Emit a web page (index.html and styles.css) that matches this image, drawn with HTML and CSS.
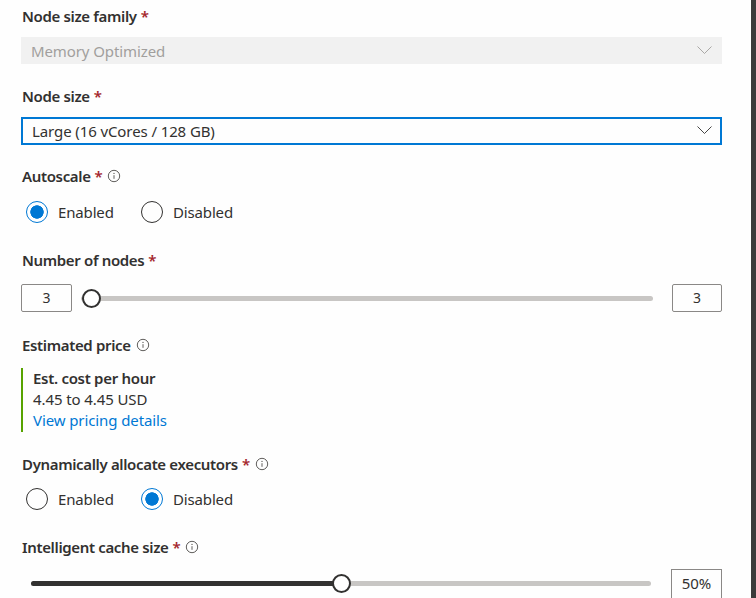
FILE: index.html
```html
<!DOCTYPE html>
<html lang="en">
<head>
    <meta charset="UTF-8">
    <meta name="viewport" content="width=device-width, initial-scale=1.0">
    <title>Node settings</title>
    <link rel="stylesheet" href="styles.css">
</head>
<body>
    <div class="page">
        <form class="settings">
            <div class="label label-first"><span>Node size family</span><span class="req">*</span></div>
            <div class="select select-disabled">
                <span>Memory Optimized</span>
                <svg class="chevron" width="15" height="8" viewBox="0 0 15 8"><path d="M.5.5l7 7 7-7" fill="none" stroke="currentColor" stroke-width=".9"/></svg>
            </div>

            <div class="label label-size"><span>Node size</span><span class="req">*</span></div>
            <div class="select select-focus">
                <span>Large (16 vCores / 128 GB)</span>
                <svg class="chevron" width="15" height="8" viewBox="0 0 15 8"><path d="M.5.5l7 7 7-7" fill="none" stroke="currentColor" stroke-width=".9"/></svg>
            </div>

            <div class="label label-auto"><span>Autoscale</span><span class="req">*</span>
                <svg class="info" width="14" height="14" viewBox="0 0 14 14"><circle cx="7" cy="7" r="5.7" fill="none" stroke="currentColor"/><path d="M7 6.2v3.6" stroke="currentColor"/><circle cx="7" cy="4.4" r=".7" fill="currentColor"/></svg>
            </div>
            <div class="radios">
                <div class="radio radio-on"><i></i>Enabled</div>
                <div class="radio"><i></i>Disabled</div>
            </div>

            <div class="label label-nodes"><span>Number of nodes</span><span class="req">*</span></div>
            <div class="slider-row slider-nodes">
                <div class="num">3</div>
                <div class="track track-nodes"><i class="thumb"></i></div>
                <div class="num num-right">3</div>
            </div>

            <div class="label label-price"><span>Estimated price</span>
                <svg class="info" width="14" height="14" viewBox="0 0 14 14"><circle cx="7" cy="7" r="5.7" fill="none" stroke="currentColor"/><path d="M7 6.2v3.6" stroke="currentColor"/><circle cx="7" cy="4.4" r=".7" fill="currentColor"/></svg>
            </div>
            <div class="price">
                <div class="price-title">Est. cost per hour</div>
                <div>4.45 to 4.45 USD</div>
                <a href="#">View pricing details</a>
            </div>

            <div class="label label-exec"><span>Dynamically allocate executors</span><span class="req">*</span>
                <svg class="info" width="14" height="14" viewBox="0 0 14 14"><circle cx="7" cy="7" r="5.7" fill="none" stroke="currentColor"/><path d="M7 6.2v3.6" stroke="currentColor"/><circle cx="7" cy="4.4" r=".7" fill="currentColor"/></svg>
            </div>
            <div class="radios radios-exec">
                <div class="radio"><i></i>Enabled</div>
                <div class="radio radio-on"><i></i>Disabled</div>
            </div>

            <div class="label label-cache"><span>Intelligent cache size</span><span class="req">*</span>
                <svg class="info" width="14" height="14" viewBox="0 0 14 14"><circle cx="7" cy="7" r="5.7" fill="none" stroke="currentColor"/><path d="M7 6.2v3.6" stroke="currentColor"/><circle cx="7" cy="4.4" r=".7" fill="currentColor"/></svg>
            </div>
            <div class="slider-row slider-cache">
                <div class="track track-cache"><b class="fill"></b><i class="thumb"></i></div>
                <div class="num num-cache">50%</div>
            </div>
        </form>
        <div class="scrollbar"></div>
    </div>
</body>
</html>
```

FILE: styles.css
```css
html, body {
    margin: 0;
    height: 100%;
    overflow: hidden;
}

body {
    font-family: 'Noto Sans', Arial, sans-serif;
    font-size: 15px;
    color: #323130;
    background-color: #fefefe;
}

.page {
    display: flex;
    height: 598px;
    overflow: hidden;
}

.settings {
    width: 701px;
    padding-left: 21px;
    flex: none;
}

.scrollbar {
    width: 5px;
    height: 598px;
    margin-left: 29px;
    background-color: #3b3b3b;
}

.label {
    display: flex;
    align-items: center;
    gap: 4px;
    height: 20px;
    padding-left: 1px;
    font-weight: 600;
    white-space: nowrap;
    letter-spacing: -0.35px;
}

.req {
    color: #a4262c;
}

.info {
    color: #605e5c;
    margin-left: 1px;
}

.label-first { margin-top: 6px; }
.label-size { margin-top: 22px; }
.label-auto { margin-top: 21px; }
.label-nodes { margin-top: 26px; }
.label-price { margin-top: 23px; }
.label-exec { margin-top: 22px; }
.label-cache { margin-top: 26px; }

.select {
    display: flex;
    align-items: center;
    justify-content: space-between;
    box-sizing: border-box;
    margin-top: 11px;
    padding: 0 10px;
    letter-spacing: -0.1px;
}

.select-disabled {
    height: 27px;
    background-color: #f1f1f1;
    color: #a19f9d;
}

.select-focus {
    height: 28px;
    border: 2px solid #0078d4;
    padding: 0 8px 0 9px;
    margin-top: 11px;
}

.chevron {
    margin-top: -2px;
}

.radios {
    display: flex;
    margin-top: 14px;
    height: 24px;
}

.radios-exec {
    margin-top: 13px;
}

.radio {
    display: flex;
    align-items: center;
    gap: 10px;
    width: 110px;
    padding-left: 5px;
    letter-spacing: -0.15px;
}

.radio i {
    display: block;
    box-sizing: border-box;
    width: 22px;
    height: 22px;
    border: 1px solid #323130;
    border-radius: 50%;
}

.radio-on i {
    border-color: #0078d4;
    background: radial-gradient(circle, #0078d4 0 6.4px, #fff 7px);
}

.slider-row {
    display: flex;
    align-items: center;
}

.slider-nodes {
    margin-top: 14px;
    height: 28px;
}

.num {
    box-sizing: border-box;
    width: 51px;
    height: 28px;
    border: 1px solid #8a8886;
    border-radius: 2px;
    text-align: center;
    font-size: 14px;
    line-height: 26px;
    flex: none;
}

.num-right {
    width: 50px;
}

.track {
    position: relative;
    height: 5px;
    margin-top: 1px;
    border-radius: 3px;
    background-color: #c8c6c4;
}

.track-nodes {
    width: 572px;
    margin-left: 9px;
    margin-right: 19px;
}

.thumb {
    position: absolute;
    top: -7px;
    box-sizing: border-box;
    width: 19px;
    height: 19px;
    border: 2px solid #323130;
    border-radius: 50%;
    background-color: #fff;
}

.track-nodes .thumb {
    left: 1px;
}

.price {
    margin-top: 13px;
    height: 64px;
    border-left: 2px solid #57a300;
    padding-left: 10px;
    line-height: 21px;
    letter-spacing: -0.1px;
}

.price-title {
    font-weight: 600;
    letter-spacing: -0.3px;
}

.price a {
    color: #0078d4;
    text-decoration: none;
}

.slider-cache {
    margin-top: 12px;
    height: 28px;
    padding-left: 10px;
}

.track-cache {
    width: 620px;
    margin-right: 20px;
}

.fill {
    display: block;
    width: 310px;
    height: 5px;
    border-radius: 3px;
    background-color: #323130;
}

.track-cache .thumb {
    left: 301px;
}

.num-cache {
    width: 51px;
    height: 30px;
    margin-top: 2px;
    border-radius: 0;
    font-size: 15px;
}
```
